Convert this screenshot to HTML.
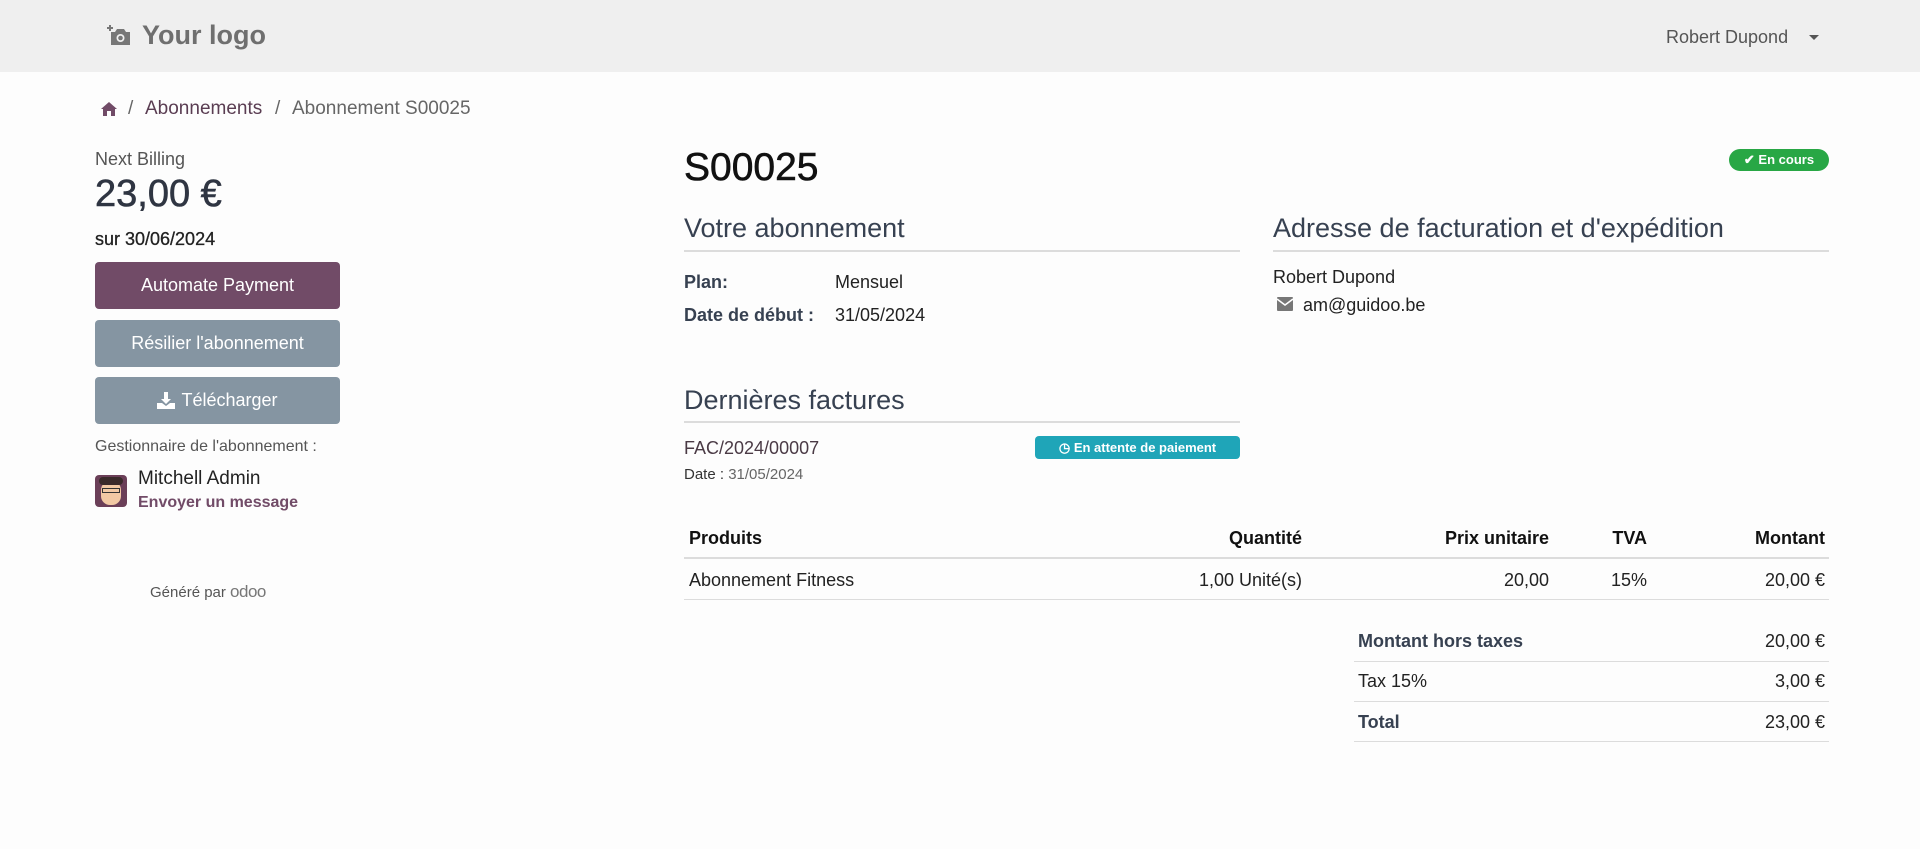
<!DOCTYPE html>
<html><head><meta charset="utf-8"><style>
*{box-sizing:border-box;margin:0;padding:0}
body{width:1920px;height:849px;background:#fdfdfd;font-family:"Liberation Sans",sans-serif;color:#374151;position:relative;overflow:hidden;font-size:18px}
.a{position:absolute;white-space:nowrap}
.hdr{position:absolute;left:0;top:0;width:1920px;height:72px;background:#efefef}
.btn{position:absolute;left:95px;width:245px;height:47px;border-radius:4px;color:#fff;font-size:18px;display:flex;align-items:center;justify-content:center}
.hr{position:absolute;height:2px;background:#dcdcdc}
.b{font-weight:bold}
.r{text-align:right}
</style></head><body>
<div class="hdr"></div>
<svg class="a" style="left:107px;top:24px" width="26" height="24" viewBox="0 0 26 24"><path d="M4 8h4l2-3h7l2 3h4v13H4z" fill="#777"/><circle cx="13.5" cy="14" r="4" fill="#efefef"/><circle cx="13.5" cy="14" r="2.3" fill="#777"/><path d="M3 1v6M0 4h6" stroke="#777" stroke-width="2"/></svg>
<div class="a b" style="left:142px;top:20px;font-size:27px;color:#6f6f6f">Your logo</div>
<div class="a" style="left:1666px;top:27px;font-size:18px;color:#555">Robert Dupond</div>
<div class="a" style="left:1809px;top:35px;width:0;height:0;border-left:5px solid transparent;border-right:5px solid transparent;border-top:5px solid #555"></div>

<svg class="a" style="left:100px;top:101px" width="18" height="15" viewBox="0 0 18 15"><path d="M9 1L1 8h2v7h4v-5h4v5h4V8h2z" fill="#714B67"/></svg>
<div class="a" style="left:128px;top:98px;color:#666;font-size:19px">/</div>
<div class="a" style="left:145px;top:98px;color:#5a3d52;font-size:19px">Abonnements</div>
<div class="a" style="left:275px;top:98px;color:#666;font-size:19px">/</div>
<div class="a" style="left:292px;top:98px;color:#666;font-size:19px">Abonnement S00025</div>

<div class="a" style="left:95px;top:149px;font-size:18px;color:#555">Next Billing</div>
<div class="a" style="left:95px;top:173px;font-size:38px;color:#2f3542;-webkit-text-stroke:0.6px #2f3542">23,00 €</div>
<div class="a" style="left:95px;top:229px;font-size:18px;color:#222;-webkit-text-stroke:0.3px #222">sur 30/06/2024</div>
<div class="btn" style="top:262px;background:#714B67">Automate Payment</div>
<div class="btn" style="top:320px;background:#8595A2">Résilier l'abonnement</div>
<div class="btn" style="top:377px;background:#8595A2"><svg width="18" height="17" viewBox="0 0 18 17" style="margin-right:6px"><path d="M7 0h4v7h3l-5 5-5-5h3z M0 11h5l4 3 4-3h5v6H0z" fill="#fff"/></svg>Télécharger</div>
<div class="a" style="left:95px;top:438px;font-size:16px;color:#555">Gestionnaire de l'abonnement :</div>
<div class="a" style="left:95px;top:475px;width:32px;height:32px;border-radius:4px;background:#6b3f58;overflow:hidden"><div style="position:absolute;left:6px;top:6px;width:20px;height:24px;border-radius:9px;background:#f2c9a4"></div><div style="position:absolute;left:4px;top:2px;width:24px;height:8px;border-radius:6px;background:#3a2a2a"></div><div style="position:absolute;left:7px;top:13px;width:18px;height:5px;border:1.5px solid #333"></div></div>
<div class="a" style="left:138px;top:468px;font-size:19px;color:#222">Mitchell Admin</div>
<div class="a b" style="left:138px;top:494px;font-size:16px;color:#714B67">Envoyer un message</div>
<div class="a" style="left:150px;top:582px;font-size:15px;color:#555">Généré par <span style="font-size:17px;color:#777;letter-spacing:-0.5px">odoo</span></div>

<div class="a" style="left:684px;top:146px;font-size:39px;color:#111;-webkit-text-stroke:0.6px #111">S00025</div>
<div class="a b" style="left:1729px;top:149px;width:100px;height:22px;border-radius:11px;background:#28a745;color:#fff;font-size:13px;line-height:22px;text-align:center">✔ En cours</div>

<div class="a" style="left:684px;top:213px;font-size:27px;color:#374151">Votre abonnement</div>
<div class="hr" style="left:684px;top:250px;width:556px"></div>
<div class="a" style="left:1273px;top:213px;font-size:27px;color:#374151">Adresse de facturation et d'expédition</div>
<div class="hr" style="left:1273px;top:250px;width:556px"></div>
<div class="a b" style="left:684px;top:272px">Plan:</div>
<div class="a" style="left:835px;top:272px;color:#222">Mensuel</div>
<div class="a b" style="left:684px;top:305px">Date de début :</div>
<div class="a" style="left:835px;top:305px;color:#222">31/05/2024</div>
<div class="a" style="left:1273px;top:267px;color:#222">Robert Dupond</div>
<svg class="a" style="left:1277px;top:297px" width="16" height="14" viewBox="0 0 16 14"><rect width="16" height="14" rx="1" fill="#777"/><path d="M0 2l8 6 8-6" stroke="#fff" stroke-width="1.5" fill="none"/></svg>
<div class="a" style="left:1303px;top:295px;color:#222">am@guidoo.be</div>

<div class="a" style="left:684px;top:385px;font-size:27px;color:#374151">Dernières factures</div>
<div class="hr" style="left:684px;top:421px;width:556px"></div>
<div class="a" style="left:684px;top:438px;color:#4a3a45">FAC/2024/00007</div>
<div class="a b" style="left:1035px;top:436px;width:205px;height:23px;border-radius:4px;background:#1fa5b8;color:#fff;font-size:13px;line-height:23px;text-align:center">◷ En attente de paiement</div>
<div class="a" style="left:684px;top:466px;font-size:15px;color:#333">Date : <span style="color:#666">31/05/2024</span></div>

<div class="a b" style="left:689px;top:528px;color:#111">Produits</div>
<div class="a b r" style="left:1100px;width:202px;top:528px;color:#111">Quantité</div>
<div class="a b r" style="left:1350px;width:199px;top:528px;color:#111">Prix unitaire</div>
<div class="a b r" style="left:1560px;width:87px;top:528px;color:#111">TVA</div>
<div class="a b r" style="left:1680px;width:145px;top:528px;color:#111">Montant</div>
<div class="hr" style="left:684px;top:557px;width:1145px"></div>
<div class="a" style="left:689px;top:570px;color:#222">Abonnement Fitness</div>
<div class="a r" style="left:1100px;width:202px;top:570px;color:#222">1,00 Unité(s)</div>
<div class="a r" style="left:1350px;width:199px;top:570px;color:#222">20,00</div>
<div class="a r" style="left:1560px;width:87px;top:570px;color:#222">15%</div>
<div class="a r" style="left:1680px;width:145px;top:570px;color:#222">20,00 €</div>
<div class="hr" style="left:684px;top:599px;width:1145px;height:1px"></div>

<div class="a b" style="left:1358px;top:631px">Montant hors taxes</div>
<div class="a r" style="left:1680px;width:145px;top:631px;color:#222">20,00 €</div>
<div class="hr" style="left:1354px;top:661px;width:475px;height:1px"></div>
<div class="a" style="left:1358px;top:671px;color:#222">Tax 15%</div>
<div class="a r" style="left:1680px;width:145px;top:671px;color:#222">3,00 €</div>
<div class="hr" style="left:1354px;top:701px;width:475px;height:1px"></div>
<div class="a b" style="left:1358px;top:712px">Total</div>
<div class="a r" style="left:1680px;width:145px;top:712px;color:#222">23,00 €</div>
<div class="hr" style="left:1354px;top:741px;width:475px;height:1px"></div>
</body></html>
